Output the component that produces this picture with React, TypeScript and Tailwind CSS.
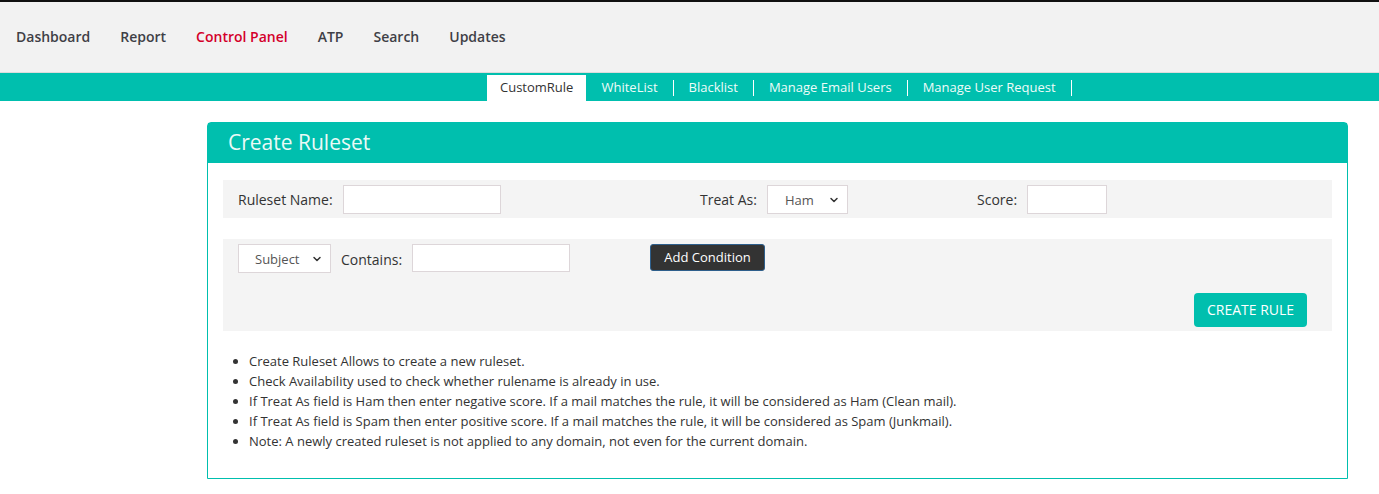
import { ChevronDown } from "lucide-react";

const navItems = ["Dashboard", "Report", "Control Panel", "ATP", "Search", "Updates"];
const tabs = ["CustomRule", "WhiteList", "Blacklist", "Manage Email Users", "Manage User Request"];

const notes = [
  "Create Ruleset Allows to create a new ruleset.",
  "Check Availability used to check whether rulename is already in use.",
  "If Treat As field is Ham then enter negative score. If a mail matches the rule, it will be considered as Ham (Clean mail).",
  "If Treat As field is Spam then enter positive score. If a mail matches the rule, it will be considered as Spam (Junkmail).",
  "Note: A newly created ruleset is not applied to any domain, not even for the current domain.",
];

function FakeSelect({ value, width, pl }: { value: string; width: string; pl: string }) {
  return (
    <div className={`relative h-[29px] ${width} border border-[#ddd6d9] bg-white`}>
      <select
        defaultValue={value}
        className={`h-full w-full appearance-none bg-transparent ${pl} pt-[3px] text-[13px] text-[#555] outline-none`}
      >
        <option>{value}</option>
      </select>
      <ChevronDown className="pointer-events-none absolute right-[7px] top-[8px] size-[12px] text-[#333]" strokeWidth={3} />
    </div>
  );
}

export default function App() {
  return (
    <div className="min-h-[494px] bg-white font-['Open_Sans','Lato',sans-serif] text-[#333]">
      {/* Top nav */}
      <div className="border-t-2 border-[#111] bg-[#f2f2f2] border-b border-b-[#dcdcdc]">
        <nav className="flex h-[70px] items-center gap-[30px] pb-[2px] pl-[16px]">
          {navItems.map((item) => (
            <a
              key={item}
              className={`text-[14px] font-semibold ${item === "Control Panel" ? "text-[#d4002a]" : "text-[#3f3f46]"}`}
            >
              {item}
            </a>
          ))}
        </nav>
      </div>

      {/* Sub tabs */}
      <div className="flex h-[28px] items-end bg-[#00bfae] pl-[487px]">
        {tabs.map((tab, i) =>
          i === 0 ? (
            <div key={tab} className="flex h-[26px] items-center bg-white px-[13px] text-[13px] text-[#333]">
              {tab}
            </div>
          ) : (
            <div key={tab} className="flex h-[26px] items-center">
              <span className="px-[15px] text-[13px] text-[#eefcf9]">{tab}</span>
              <span className="h-[16px] w-px bg-white" />
            </div>
          )
        )}
      </div>

      {/* Panel */}
      <div className="ml-[207px] mt-[21px] w-[1141px] rounded-t-[4px] border border-[#00bfae]">
        <div className="flex h-[40px] items-center bg-[#00bfae] pl-[20px] text-[21px] text-[#eafaf7]">
          Create Ruleset
        </div>

        <div className="px-[15px] pt-[17px]">
          <div className="flex h-[38px] items-center bg-[#f4f4f4] pl-[15px] text-[14px]">
            <div className="flex w-[462px] items-center">
              <label className="mr-[10px]">Ruleset Name:</label>
              <input className="h-[29px] w-[158px] border border-[#ddd6d9] bg-white outline-none" />
            </div>
            <div className="flex w-[277px] items-center">
              <label className="mr-[10px]">Treat As:</label>
              <FakeSelect value="Ham" width="w-[81px]" pl="pl-[17px]" />
            </div>
            <div className="flex items-center">
              <label className="mr-[10px]">Score:</label>
              <input className="h-[29px] w-[80px] border border-[#ddd6d9] bg-white outline-none" />
            </div>
          </div>

          <div className="mt-[21px] h-[92px] bg-[#f4f4f4] pl-[15px] pr-[25px] pt-[5px] text-[14px]">
            <div className="flex items-start">
              <FakeSelect value="Subject" width="w-[93px]" pl="pl-[16px]" />
              <label className="ml-[10px] mr-[10px] mt-[5px]">Contains:</label>
              <input className="h-[28px] w-[158px] border border-[#ddd6d9] bg-white outline-none" />
              <button className="ml-[80px] h-[27px] w-[115px] rounded-[3px] border border-[#2e5f8c] bg-[#333] text-[13px] text-white">
                Add Condition
              </button>
            </div>
            <div className="mt-[20px] flex justify-end">
              <button className="h-[34px] w-[113px] rounded-[4px] bg-[#00bfae] pb-[1px] text-[14px] text-white">
                CREATE RULE
              </button>
            </div>
          </div>
        </div>

        <ul className="list-disc pb-[27px] pl-[41px] pt-[20px] text-[13px] leading-[20px] text-[#333]">
          {notes.map((n) => (
            <li key={n}>{n}</li>
          ))}
        </ul>
      </div>
    </div>
  );
}
